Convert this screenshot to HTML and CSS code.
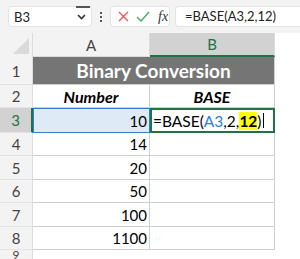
FILE: index.html
```html
<!DOCTYPE html>
<html lang="en">
<head>
    <meta charset="UTF-8">
    <title>Binary Conversion</title>
    <link rel="stylesheet" href="styles.css">
</head>
<body>
    <div class="formula-bar">
        <div class="name-box">
            <span>B3</span>
            <svg class="chevron" width="9" height="6" viewBox="0 0 9 6"><path d="M1 1 L4.5 4.5 L8 1" fill="none" stroke="#333" stroke-width="1.6"/></svg>
        </div>
        <div class="dots"><i></i><i></i><i></i></div>
        <div class="actions">
            <svg width="11" height="11" viewBox="0 0 11 11"><path d="M1 1 L10 10 M10 1 L1 10" stroke="#e25c5c" stroke-width="1.4"/></svg>
            <svg width="14" height="11" viewBox="0 0 14 11"><path d="M1 6 L5 10 L13 1" fill="none" stroke="#4eae6a" stroke-width="1.5"/></svg>
            <span class="fx">fx</span>
        </div>
        <div class="formula">=BASE(A3,2,12)</div>
    </div>
    <div class="sheet">
        <div class="corner"><span class="tri"></span></div>
        <div class="col-head">A</div>
        <div class="col-head active">B</div>
        <div class="blank"></div>

        <div class="row-head">1</div>
        <div class="title">Binary Conversion</div>
        <div class="blank"></div>

        <div class="row-head">2</div>
        <div class="cell label">Number</div>
        <div class="cell label">BASE</div>
        <div class="blank"></div>

        <div class="row-head active">3</div>
        <div class="cell num ref">10</div>
        <div class="cell edit">=BASE(<span class="blue">A3</span>,2,<span class="hl">12</span>)<span class="caret"></span></div>
        <div class="blank"></div>

        <div class="row-head">4</div>
        <div class="cell num">14</div>
        <div class="cell"></div>
        <div class="blank"></div>

        <div class="row-head">5</div>
        <div class="cell num">20</div>
        <div class="cell"></div>
        <div class="blank"></div>

        <div class="row-head">6</div>
        <div class="cell num">50</div>
        <div class="cell"></div>
        <div class="blank"></div>

        <div class="row-head">7</div>
        <div class="cell num">100</div>
        <div class="cell"></div>
        <div class="blank"></div>

        <div class="row-head">8</div>
        <div class="cell num">1100</div>
        <div class="cell"></div>
        <div class="blank"></div>

        <div class="row-head last">9</div>
        <div class="blank"></div>
        <div class="blank"></div>
        <div class="blank"></div>
    </div>
</body>
</html>
```

FILE: styles.css
```css
* {
    margin: 0;
    padding: 0;
    box-sizing: border-box;
}

body {
    width: 300px;
    height: 259px;
    overflow: hidden;
    background: #ffffff;
    font-family: Lato, 'Liberation Sans', sans-serif;
    color: #000000;
}

.formula-bar {
    height: 33px;
    background: #f3f3f3;
    display: flex;
    align-items: center;
    padding: 0 0 0 8px;
}

.name-box {
    width: 84px;
    height: 21px;
    background: #ffffff;
    border: 1px solid #e3e3e3;
    border-radius: 4px;
    display: flex;
    align-items: center;
    justify-content: space-between;
    padding: 0 5px 0 5px;
    font-size: 13px;
    color: #222222;
    position: relative;
}

    .name-box::before {
        content: '';
        position: absolute;
        top: -1px;
        right: 1px;
        width: 14px;
        height: 2px;
        background: #555555;
    }

.dots {
    width: 18px;
    display: flex;
    flex-direction: column;
    align-items: center;
    gap: 2px;
}

    .dots i {
        width: 2px;
        height: 2px;
        background: #555555;
    }

.actions {
    width: 60px;
    height: 21px;
    background: #ffffff;
    border: 1px solid #e3e3e3;
    border-radius: 4px;
    display: flex;
    align-items: center;
    gap: 7px;
    padding-left: 7px;
}

.fx {
    font-family: 'Liberation Serif', serif;
    font-style: italic;
    font-size: 14px;
    color: #333333;
    margin-left: 1px;
}

.formula {
    flex: 1;
    margin-left: 5px;
    height: 21px;
    background: #ffffff;
    border: 1px solid #e3e3e3;
    border-right: none;
    border-radius: 4px 0 0 4px;
    font-size: 13px;
    line-height: 19px;
    padding-left: 9px;
    color: #222222;
}

.sheet {
    display: grid;
    grid-template-columns: 33px 117px 125px 1fr;
    grid-template-rows: 24px 28px 23px 25px 23px 24px 23px 24px 23px 10px;
}

.corner {
    background: #f3f3f3;
    border-right: 1px solid #dcdcdc;
    position: relative;
}

    .corner .tri {
        position: absolute;
        right: 3px;
        bottom: 3px;
        width: 0;
        height: 0;
        border-left: 16px solid transparent;
        border-bottom: 16px solid #dadada;
    }

.col-head {
    background: #f3f3f3;
    border-right: 1px solid #dcdcdc;
    border-bottom: 1px solid #dcdcdc;
    text-align: center;
    font-size: 15px;
    line-height: 24px;
    color: #444444;
}

    .col-head.active {
        background: #d2d2d2;
        color: #217346;
        border-bottom: 2px solid #217346;
        line-height: 23px;
    }

.row-head {
    background: #f3f3f3;
    border-right: 1px solid #dcdcdc;
    border-bottom: 1px solid #e3e3e3;
    text-align: center;
    font-size: 15px;
    color: #444444;
    display: flex;
    align-items: center;
    justify-content: center;
}

    .row-head.active {
        background: #d2d2d2;
        color: #217346;
        border-right: 2px solid #217346;
    }

    .row-head.last {
        align-items: flex-start;
        line-height: 10px;
        font-size: 12px;
    }

.title {
    grid-column: 2 / 4;
    background: #757575;
    color: #ffffff;
    font-weight: bold;
    font-size: 19px;
    display: flex;
    align-items: center;
    justify-content: center;
    border-right: 1px solid #cfcfcf;
    border-bottom: 1px solid #cfcfcf;
}

.cell {
    border-right: 1px solid #cfcfcf;
    border-bottom: 1px solid #cfcfcf;
    font-size: 15px;
    display: flex;
    align-items: center;
    padding: 0 2px;
    white-space: nowrap;
}

    .cell.label {
        justify-content: center;
        font-weight: bold;
        font-style: italic;
        font-size: 16px;
    }

    .cell.num {
        justify-content: flex-end;
    }

    .cell.ref {
        background: #deebf7;
        border: 1.5px solid #2e7fd4;
    }

    .cell.edit {
        border: 2px solid #217346;
        padding-left: 1px;
        font-size: 15.5px;
    }

.blue {
    color: #2e7fd4;
}

.hl {
    background: #ffff00;
    font-weight: bold;
}

.caret {
    display: inline-block;
    width: 1px;
    height: 15px;
    background: #000000;
    margin-left: 1px;
}

.blank {
    background: #ffffff;
}
```
